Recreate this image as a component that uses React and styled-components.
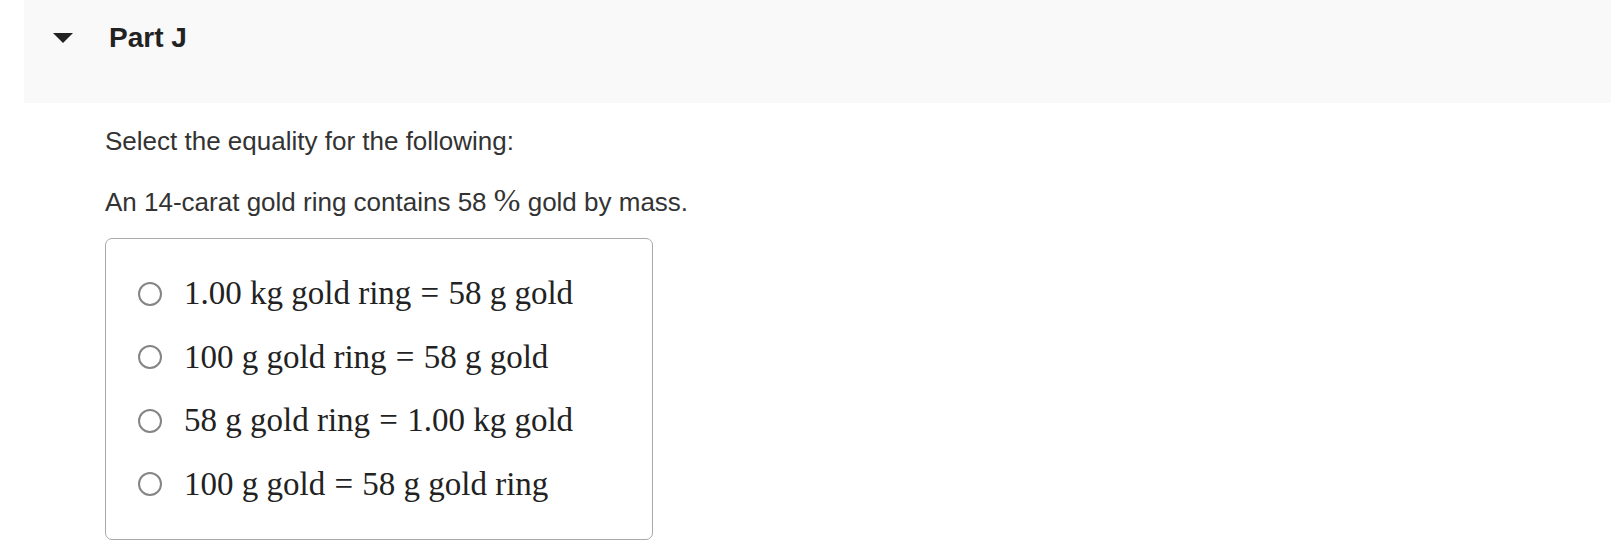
import React from "react";
import styled, { createGlobalStyle } from "styled-components";

const Global = createGlobalStyle`
  html, body { margin: 0; padding: 0; background: #fff; }
  body { font-family: "Liberation Sans", Arial, sans-serif; color: #333; }
`;

const Page = styled.div`
  padding-left: 24px;
`;

const Header = styled.div`
  height: 103px;
  box-sizing: border-box;
  background: #f9f9f9;
  display: flex;
  align-items: center;
  padding: 0 0 27px 29px;
`;

const Caret = styled.span`
  width: 0;
  height: 0;
  border-left: 10.5px solid transparent;
  border-right: 10.5px solid transparent;
  border-top: 10px solid #222;
  margin-right: 36px;
`;

const Title = styled.h2`
  margin: 0;
  font-size: 28px;
  font-weight: 700;
  color: #222;
`;

const Body = styled.div`
  padding: 20px 0 0 81px;
`;

const Para = styled.p`
  margin: 0 0 ${(p) => p.$mb || 0}px;
  font-size: 26px;
  line-height: 36px;
  color: #333;
`;

const Pct = styled.span`
  font-family: "Liberation Serif", "Times New Roman", serif;
  font-size: 32px;
`;

const Box = styled.div`
  width: 548px;
  box-sizing: border-box;
  border: 1.5px solid #a9a9a9;
  border-radius: 7px;
  padding: 23px 0 23px 32px;
  margin-top: 18px;
`;

const Option = styled.label`
  display: flex;
  align-items: center;
  height: 63.5px;
  cursor: pointer;
`;

const Radio = styled.span`
  width: 24px;
  height: 24px;
  box-sizing: border-box;
  border: 2px solid #858585;
  border-radius: 50%;
  margin-right: 22px;
  flex: none;
`;

const Math = styled.span`
  font-family: "Liberation Serif", "Times New Roman", serif;
  font-size: 33px;
  color: #222;
  white-space: pre;
`;

const Eq = styled.span`
  margin: 0 0.28em;
`;

const options = [
  ["1.00 kg gold ring", "58 g gold"],
  ["100 g gold ring", "58 g gold"],
  ["58 g gold ring", "1.00 kg gold"],
  ["100 g gold", "58 g gold ring"],
];

export default function App() {
  return (
    <>
      <Global />
      <Page>
        <Header>
          <Caret />
          <Title>Part J</Title>
        </Header>
        <Body>
          <Para $mb={23}>Select the equality for the following:</Para>
          <Para>
            An 14-carat gold ring contains 58 <Pct>%</Pct> gold by mass.
          </Para>
          <Box>
            {options.map(([l, r], i) => (
              <Option key={i}>
                <Radio />
                <Math>
                  {l}
                  <Eq>=</Eq>
                  {r}
                </Math>
              </Option>
            ))}
          </Box>
        </Body>
      </Page>
    </>
  );
}
